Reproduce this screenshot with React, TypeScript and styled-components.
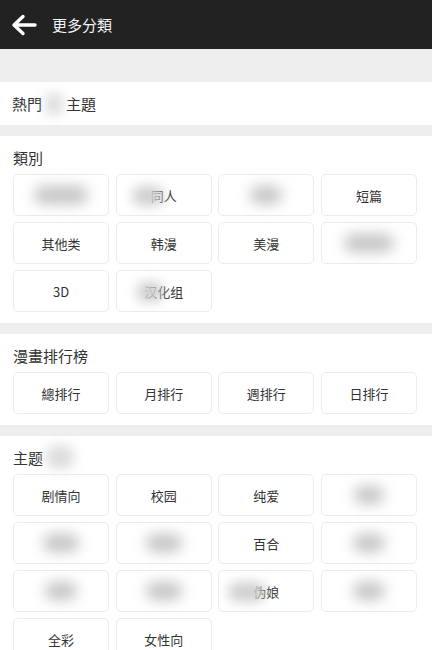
import React from 'react'
import styled, { createGlobalStyle } from 'styled-components'

const GlobalStyle = createGlobalStyle`
  html, body {
    margin: 0;
    padding: 0;
    background: #eeeeee;
    font-family: "Noto Sans CJK SC", "Noto Sans", sans-serif;
  }
`

type Tag = { label?: string; blur?: number }

const categories: Tag[] = [
  { blur: 54 },
  { label: '同人', blur: 32 },
  { blur: 32 },
  { label: '短篇' },
  { label: '其他类' },
  { label: '韩漫' },
  { label: '美漫' },
  { blur: 50 },
  { label: '3D' },
  { label: '汉化组', blur: 28 },
]

const ranks: Tag[] = [{ label: '總排行' }, { label: '月排行' }, { label: '週排行' }, { label: '日排行' }]

const themes: Tag[] = [
  { label: '剧情向' },
  { label: '校园' },
  { label: '纯爱' },
  { blur: 30 },
  { blur: 36 },
  { blur: 36 },
  { label: '百合' },
  { blur: 32 },
  { blur: 32 },
  { blur: 36 },
  { label: '伪娘', blur: 38 },
  { blur: 32 },
  { label: '全彩' },
  { label: '女性向' },
]

const BackArrow = () => (
  <svg width="26" height="22" viewBox="0 0 26 22">
    <path d="M24 11H4M12 2.5L3 11l9 8.5" fill="none" stroke="#fff" strokeWidth="3.4" strokeLinecap="round" strokeLinejoin="round" />
  </svg>
)

const TagButton = ({ tag }: { tag: Tag }) => (
  <Button>
    {tag.blur && !tag.label && <Smudge $w={tag.blur} />}
    {tag.blur && tag.label && <SmudgeInline $w={tag.blur} />}
    {tag.label && <span>{tag.label}</span>}
  </Button>
)

const App: React.FC = () => {
  return (
    <>
      <GlobalStyle />
      <Page>
        <TopBar>
          <BackArrow />
          <TopTitle>更多分類</TopTitle>
        </TopBar>
        <Spacer />
        <HotRow>
          熱門
          <HeadSmudge $w={18} />
          主題
        </HotRow>
        <Section>
          <SectionTitle>類別</SectionTitle>
          <Grid>
            {categories.map((t, i) => (
              <TagButton key={i} tag={t} />
            ))}
          </Grid>
        </Section>
        <Section>
          <SectionTitle>漫畫排行榜</SectionTitle>
          <Grid>
            {ranks.map((t, i) => (
              <TagButton key={i} tag={t} />
            ))}
          </Grid>
        </Section>
        <Section>
          <SectionTitle>
            主题
            <HeadSmudge $w={28} />
          </SectionTitle>
          <Grid>
            {themes.map((t, i) => (
              <TagButton key={i} tag={t} />
            ))}
          </Grid>
        </Section>
      </Page>
    </>
  )
}

export default App

const Page = styled.div`
  width: 432px;
  min-height: 650px;
  background: #eeeeee;
  overflow: hidden;
`

const TopBar = styled.div`
  height: 49px;
  background: #222222;
  display: flex;
  align-items: center;
  padding-left: 11px;
  gap: 15px;
`

const TopTitle = styled.div`
  color: #f4f4f4;
  font-size: 15px;
`

const Spacer = styled.div`
  height: 33px;
`

const HotRow = styled.div`
  height: 43px;
  background: #ffffff;
  display: flex;
  align-items: center;
  padding-left: 12px;
  font-size: 15px;
  color: #333;
  margin-bottom: 11px;
`

const Section = styled.div`
  background: #ffffff;
  padding: 0 15px 11px 13px;
  margin-bottom: 11px;
`

const SectionTitle = styled.div`
  height: 38px;
  display: flex;
  align-items: center;
  font-size: 15px;
  color: #333;
  padding-top: 4px;
  box-sizing: border-box;
`

const Grid = styled.div`
  display: grid;
  grid-template-columns: repeat(4, 1fr);
  column-gap: 6.5px;
  row-gap: 6px;
`

const Button = styled.div`
  height: 42px;
  box-sizing: border-box;
  border: 1px solid #ececec;
  border-radius: 5px;
  display: flex;
  align-items: center;
  justify-content: center;
  font-size: 13px;
  color: #333;
  position: relative;
`

const Smudge = styled.span<{ $w: number }>`
  display: block;
  width: ${(p) => p.$w}px;
  height: 18px;
  border-radius: 9px;
  background: #c4c4c4;
  filter: blur(7px);
`

const SmudgeInline = styled.span<{ $w: number }>`
  position: absolute;
  left: calc(50% - ${(p) => p.$w}px);
  top: 11px;
  width: ${(p) => p.$w}px;
  height: 20px;
  border-radius: 10px;
  background: #d0d0d0;
  filter: blur(6px);
`

const HeadSmudge = styled.span<{ $w: number }>`
  display: inline-block;
  width: ${(p) => p.$w}px;
  height: 24px;
  margin: 0 3px;
  border-radius: 10px;
  background: #dddddd;
  filter: blur(6px);
`
